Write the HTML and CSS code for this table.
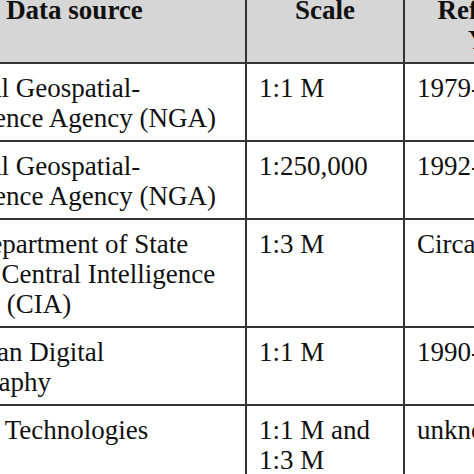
FILE: index.html
```html
<!DOCTYPE html>
<html>
<head>
<meta charset="utf-8">
<link rel="stylesheet" href="styles.css">
</head>
<body>
<table class="tbl">
  <colgroup>
    <col class="c-src">
    <col class="c-scale">
    <col class="c-year">
  </colgroup>
  <thead>
    <tr>
      <th>Data source</th>
      <th>Scale</th>
      <th>Reference<br>Year</th>
    </tr>
  </thead>
  <tbody>
    <tr>
      <td>National Geospatial-<br>Intelligence Agency (NGA)</td>
      <td>1:1 M</td>
      <td>1979-1997</td>
    </tr>
    <tr>
      <td>National Geospatial-<br>Intelligence Agency (NGA)</td>
      <td>1:250,000</td>
      <td>1992-2000</td>
    </tr>
    <tr>
      <td>U.S. Department of State<br>and the Central Intelligence<br>Agency (CIA)</td>
      <td>1:3 M</td>
      <td>Circa 2000</td>
    </tr>
    <tr>
      <td>American Digital<br>Cartography</td>
      <td>1:1 M</td>
      <td>1990-1999</td>
    </tr>
    <tr>
      <td>Garmin Technologies</td>
      <td>1:1 M and<br>1:3 M</td>
      <td>unknown</td>
    </tr>
  </tbody>
</table>
</body>
</html>
```

FILE: styles.css
```css
html, body {
  margin: 0;
  padding: 0;
  background: #ffffff;
  overflow: hidden;
}

.tbl {
  border-collapse: collapse;
  table-layout: fixed;
  width: 683px;
  min-width: 683px;
  margin: -16px 0 0 -98px;
  font-family: "Liberation Serif", "Times New Roman", serif;
  font-size: 27px;
  line-height: 30px;
  color: #111111;
}

.c-src { width: 343px; }
.c-scale { width: 158px; }
.c-year { width: 182px; }

.tbl th,
.tbl td {
  border: 2px solid #333333;
  padding: 9px 12px 7px;
  vertical-align: top;
  text-align: left;
  white-space: nowrap;
}

.tbl th {
  background: #d6d6d6;
  font-weight: bold;
  text-align: center;
}
```
